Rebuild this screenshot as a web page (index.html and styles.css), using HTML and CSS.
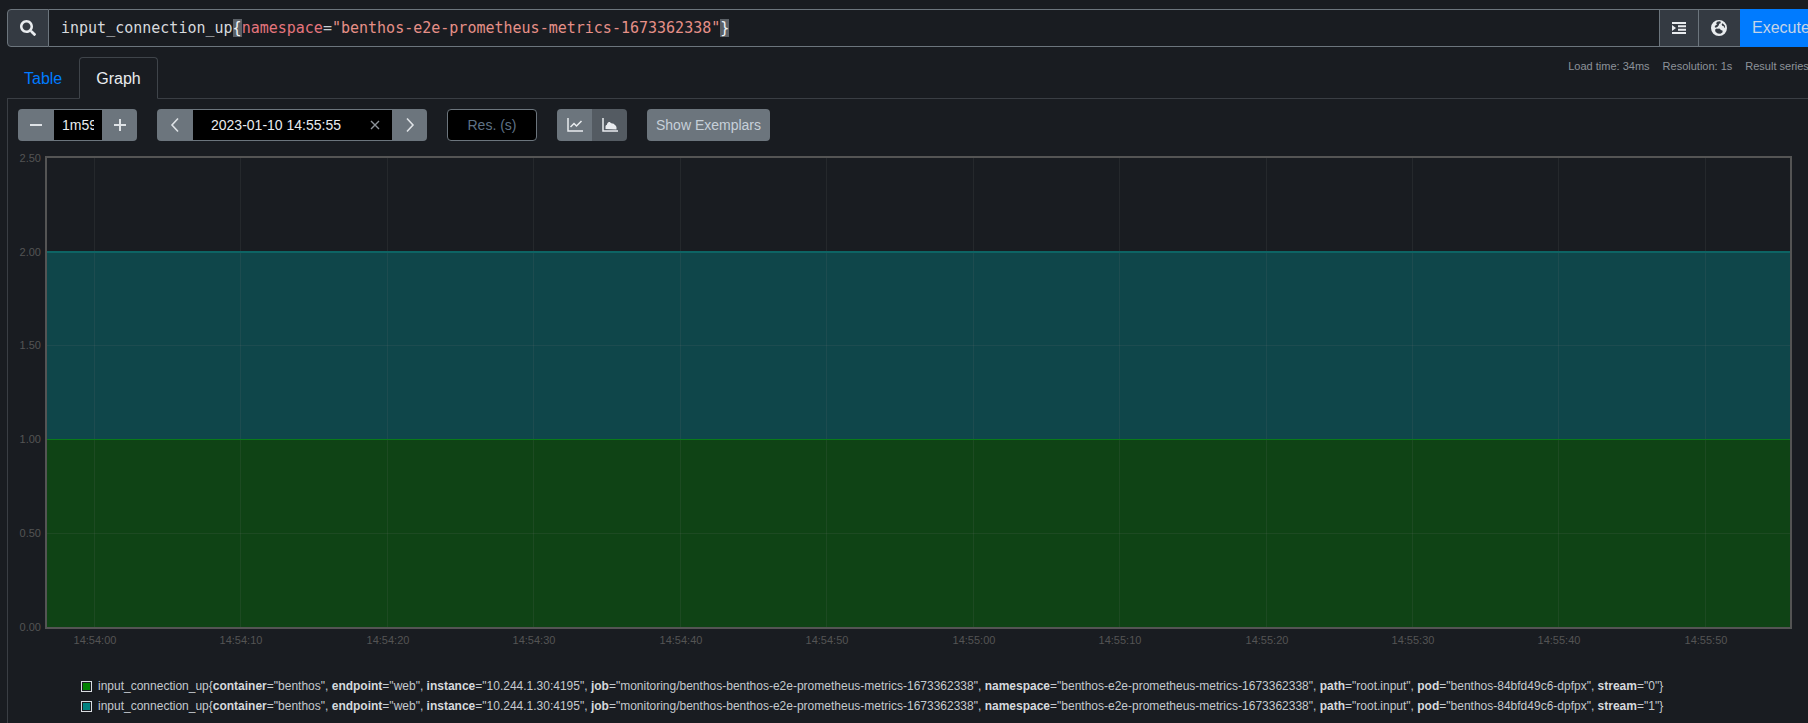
FILE: index.html
```html
<!DOCTYPE html>
<html lang="en">
<head>
<meta charset="utf-8">
<title>Prometheus Time Series Collection and Processing Server</title>
<link rel="stylesheet" href="styles.css">
</head>
<body>
<div class="page">
  <div class="query-bar">
    <div class="addon addon-search">
      <svg class="icon-search" viewBox="0 0 512 512"><path d="M505 442.7L405.3 343c-4.5-4.5-10.6-7-17-7H372c27.6-35.3 44-79.7 44-128C416 93.1 322.9 0 208 0S0 93.1 0 208s93.1 208 208 208c48.3 0 92.7-16.4 128-44v16.3c0 6.4 2.5 12.5 7 17l99.7 99.7c9.4 9.4 24.6 9.4 33.9 0l28.3-28.3c9.4-9.4 9.4-24.6.1-34zM208 336c-70.7 0-128-57.2-128-128 0-70.7 57.2-128 128-128 70.7 0 128 57.2 128 128 0 70.7-57.2 128-128 128z"/></svg>
    </div>
    <div class="query-input"><span>input_connection_up</span><span class="match">{</span><span class="label">namespace</span><span class="op">=</span><span class="str">"benthos-e2e-prometheus-metrics-1673362338"</span><span class="match">}</span></div>
    <div class="addon addon-indent">
      <svg class="icon-indent" viewBox="0 0 14 12"><path d="M0 0h14v2H0zM6 3.35h8v1.8H6zM6 6.85h8v1.8H6zM0 10h14v2H0zM0 3l4 3-4 3z"/></svg>
    </div>
    <div class="addon addon-globe">
      <svg class="icon-globe" viewBox="0 0 16 16"><path fill-rule="evenodd" d="M8 0a8 8 0 1 1 0 16A8 8 0 0 1 8 0zM8.400 1.200 6.200 1.800 5 3.200l1.200 1-1.800 1.400-.8 1.400 1.200.8 1.800-1 1.200-1.600.4-1.400 1.400-.6.200-1.400zM11.600 3.200l-1 1.100.6 1.400 1.400.4.500 1.500 1 .2-.3-2.200zM5.600 8.600 4 9.800l.6 2.200 2.200 1.600 2.600.2 2-1.400.3-1.600-1.700-.8-1.700-1.500-1.400.2z"/></svg>
    </div>
    <div class="execute">Execute</div>
  </div>

  <div class="tab-row">
    <a class="tab">Table</a>
    <a class="tab tab-active">Graph</a>
    <div class="stats">
      <span>Load time: 34ms</span>
      <span>Resolution: 1s</span>
      <span>Result series: 2</span>
    </div>
  </div>

  <div class="panel">
    <div class="controls">
      <div class="group">
        <div class="btn btn-step"><svg class="icon-op" viewBox="0 0 12 12"><path d="M0 5h12v2H0z"/></svg></div>
        <div class="field field-range"><span class="field-clip">1m59s</span></div>
        <div class="btn btn-step btn-plus"><svg class="icon-op" viewBox="0 0 12 12"><path d="M5 0h2v5h5v2H7v5H5V7H0V5h5z"/></svg></div>
      </div>
      <div class="group">
        <div class="btn btn-step"><svg class="icon-chev" viewBox="0 0 10 16"><path d="M8 1.500 2 8l6 6.500"/></svg></div>
        <div class="field field-date"><span>2023-01-10 14:55:55</span><svg class="icon-x" viewBox="0 0 10 10"><path d="M1 1l8 8M9 1l-8 8"/></svg></div>
        <div class="btn btn-step btn-next"><svg class="icon-chev" viewBox="0 0 10 16"><path d="M2 1.500 8 8l-6 6.500"/></svg></div>
      </div>
      <div class="res">Res. (s)</div>
      <div class="group">
        <div class="btn btn-toggle"><svg class="icon-chart" viewBox="0 0 16 14"><path class="thin" d="M1 0v13h15" /><path class="thin" d="M3.500 9 7 5.500l2.500 2.500L14.500 3"/></svg></div>
        <div class="btn btn-toggle btn-on"><svg class="icon-chart" viewBox="0 0 16 14"><path class="thin" d="M1 0v13h15"/><path class="solid" d="M3.500 11V8.500c0-1 .7-1.500 1.300-1.500.2-2 1.500-3.500 2.900-3 1 .4 1.300 1.500 2.500 1.500 1.500 0 2 .6 2.800 1.500.8.800 1.500 1.500 1.500 2.500v2z"/></svg></div>
      </div>
      <div class="btn btn-text">Show Exemplars</div>
    </div>

    <svg class="chart" viewBox="8 150 1800 510" width="1800" height="510">
      <g class="grid">
        <path d="M94.500 158V252M240.500 158V252M387.500 158V252M533.500 158V252M680.500 158V252M826.500 158V252M973.500 158V252M1119.500 158V252M1266.500 158V252M1412.500 158V252M1558.500 158V252M1705.500 158V252"/>
      </g>
      <rect class="area-teal" x="47" y="252" width="1743" height="188"/>
      <rect class="area-green" x="47" y="440" width="1743" height="187"/>
      <g class="grid">
        <path d="M94.500 252V627M240.500 252V627M387.500 252V627M533.500 252V627M680.500 252V627M826.500 252V627M973.500 252V627M1119.500 252V627M1266.500 252V627M1412.500 252V627M1558.500 252V627M1705.500 252V627M47 345.500H1790M47 533.500H1790"/>
      </g>
      <path class="line-teal" d="M47 252H1790"/>
      <path class="line-green" d="M47 439.500H1790"/>
      <rect class="frame" x="46" y="157" width="1745" height="471"/>
      <g class="ylab">
        <text x="41" y="162">2.50</text>
        <text x="41" y="256">2.00</text>
        <text x="41" y="349">1.50</text>
        <text x="41" y="443">1.00</text>
        <text x="41" y="537">0.50</text>
        <text x="41" y="631">0.00</text>
      </g>
      <g class="xlab">
        <text x="95" y="644">14:54:00</text>
        <text x="241" y="644">14:54:10</text>
        <text x="388" y="644">14:54:20</text>
        <text x="534" y="644">14:54:30</text>
        <text x="681" y="644">14:54:40</text>
        <text x="827" y="644">14:54:50</text>
        <text x="974" y="644">14:55:00</text>
        <text x="1120" y="644">14:55:10</text>
        <text x="1267" y="644">14:55:20</text>
        <text x="1413" y="644">14:55:30</text>
        <text x="1559" y="644">14:55:40</text>
        <text x="1706" y="644">14:55:50</text>
      </g>
    </svg>

    <div class="legend">
      <div class="legend-row">
        <span class="swatch"><span class="swatch-fill fill-green"></span></span>
        <span>input_connection_up{<b>container</b>="benthos", <b>endpoint</b>="web", <b>instance</b>="10.244.1.30:4195", <b>job</b>="monitoring/benthos-benthos-e2e-prometheus-metrics-1673362338", <b>namespace</b>="benthos-e2e-prometheus-metrics-1673362338", <b>path</b>="root.input", <b>pod</b>="benthos-84bfd49c6-dpfpx", <b>stream</b>="0"}</span>
      </div>
      <div class="legend-row">
        <span class="swatch"><span class="swatch-fill fill-teal"></span></span>
        <span>input_connection_up{<b>container</b>="benthos", <b>endpoint</b>="web", <b>instance</b>="10.244.1.30:4195", <b>job</b>="monitoring/benthos-benthos-e2e-prometheus-metrics-1673362338", <b>namespace</b>="benthos-e2e-prometheus-metrics-1673362338", <b>path</b>="root.input", <b>pod</b>="benthos-84bfd49c6-dpfpx", <b>stream</b>="1"}</span>
      </div>
    </div>
  </div>
</div>
</body>
</html>
```
FILE: styles.css
```css
* { box-sizing: border-box; }
html, body { margin: 0; padding: 0; height: 100%; overflow: hidden; background: #191c21; }
body { font-family: "Liberation Sans", Arial, sans-serif; color: #dee2e6; font-size: 14px; }
.page { width: 1880px; padding: 9px 0 0 7px; }

.query-bar { display: flex; width: 1860px; height: 38px; }
.addon { display: flex; align-items: center; justify-content: center; background: #343a42; border: 1px solid #6c757d; }
.addon-search { width: 42px; border-radius: 4px 0 0 4px; }
.addon-indent { width: 40px; border-left: 1px solid #6c757d; }
.addon-globe { width: 41px; padding-right: 2px; border-left: 0; border-right: 0; }
.icon-search { width: 16px; height: 16px; fill: #e9ecef; }
.icon-indent { width: 14px; height: 14px; fill: #e9ecef; }
.icon-globe { width: 16px; height: 16px; fill: #e9ecef; }
.query-input { flex: none; width: 1610px; display: flex; align-items: center; padding-left: 12px; border: 1px solid #6c757d; border-left: 0; border-right: 0; font-family: "DejaVu Sans Mono", monospace; font-size: 15px; color: #d6d9dd; white-space: pre; }
.match { background: #5b6066; color: #f1f3f5; }
.label { color: #e5757d; }
.op { color: #c9ced4; }
.str { color: #e69088; }
.execute { width: 120px; padding: 0 12px; display: flex; align-items: center; background: #007bff; color: #c5d4e8; font-size: 16px; }

.tab-row { display: flex; align-items: stretch; height: 42px; margin-top: 10px; padding-left: 1px; border-bottom: 1px solid #3a3e44; }
.tab { display: block; padding: 13px 16px 0; font-size: 16px; color: #007bff; height: 42px; }
.tab-active { color: #e9ecef; background: #191c21; border: 1px solid #3f444a; border-bottom: 1px solid #191c21; border-radius: 4px 4px 0 0; padding: 12px 16px 0; width: 79px; margin-left: 1px; }
.stats { display: flex; gap: 13px; margin-left: 1410px; padding-top: 3px; font-size: 11px; color: #8d939a; white-space: nowrap; }

.panel { border-left: 1px solid #3a3e44; padding: 10px 0 0 10px; height: 640px; }
.controls { display: flex; height: 32px; }
.group { display: flex; height: 32px; margin-right: 20px; border-radius: 4px; overflow: hidden; flex: none; }
.btn { display: flex; align-items: center; justify-content: center; background: #6c757d; color: #c7d0d9; height: 32px; }
.btn-step { width: 36px; }
.btn-plus { width: 35px; }
.btn-next { width: 35px; }
.btn-toggle { width: 35px; }
.btn-on { background: #545b62; }
.btn-text { width: 123px; border-radius: 4px; font-size: 14px; }
.icon-op { width: 12px; height: 12px; fill: #dee2e6; }
.icon-chev { width: 10px; height: 16px; fill: none; stroke: #dee2e6; stroke-width: 1.600; }
.icon-x { width: 10px; height: 10px; fill: none; stroke: #8d939a; stroke-width: 1.400; margin-left: 29px; }
.icon-chart { width: 16px; height: 14px; }
.thin { fill: none; stroke: #e9ecef; stroke-width: 1.500; }
.solid { fill: #e9ecef; }
.field { display: flex; align-items: center; background: #000; border-top: 1px solid #6c757d; border-bottom: 1px solid #6c757d; color: #e9ecef; font-size: 14px; height: 32px; }
.field-range { width: 48px; padding-left: 8px; }
.field-clip { display: block; width: 32px; overflow: hidden; white-space: nowrap; }
.field-date { width: 199px; padding-left: 18px; }
.res { flex: none; display: flex; align-items: center; justify-content: center; width: 90px; height: 32px; margin-right: 20px; background: #000; border: 1px solid #6c757d; border-radius: 4px; color: #5f7286; font-size: 14px; }

.chart { display: block; margin: 9px 0 0 -10px; }
.grid path { fill: none; stroke: rgba(120, 125, 125, 0.13); stroke-width: 1; }
.area-teal { fill: #0f464a; }
.area-green { fill: #0f4315; }
.line-teal { stroke: #0d6464; stroke-width: 2; fill: none; }
.line-green { stroke: #0b7a18; stroke-width: 1; fill: none; }
.frame { fill: none; stroke: #545454; stroke-width: 2; }
.ylab text { font-size: 11px; fill: #545454; text-anchor: end; }
.xlab text { font-size: 11px; fill: #545454; text-anchor: middle; }

.legend { padding: 16px 0 0 63px; font-size: 12px; color: #c4c9ce; }
.legend-row { display: flex; align-items: center; height: 20px; white-space: nowrap; }
.legend-row b { color: #d5d9dd; }
.swatch { flex: none; display: block; width: 11px; height: 11px; padding: 1px; margin-right: 6px; border: 1px solid #d8dce0; }
.swatch-fill { display: block; width: 100%; height: 100%; }
.fill-green { background: #008000; }
.fill-teal { background: #008080; }
```
